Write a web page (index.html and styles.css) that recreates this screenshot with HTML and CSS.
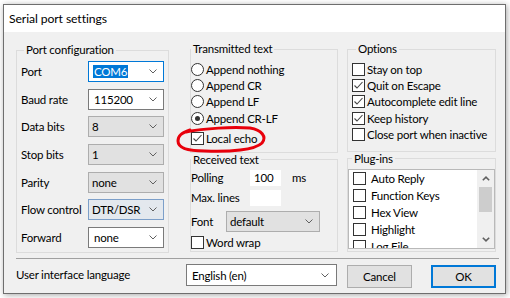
FILE: index.html
```html
<!DOCTYPE html>
<html>
<head>
<meta charset="utf-8">
<title>Serial port settings</title>
<link rel="stylesheet" href="styles.css">
</head>
<body>
<div class="window">
  <div class="titlebar">Serial port settings</div>
  <div class="client">
    <div class="columns">
      <fieldset class="group port-group">
        <legend>Port configuration</legend>
        <div class="form-rows">
          <div class="form-row"><span class="lbl">Port</span><div class="combo edit focus"><span class="selected">COM6</span><svg class="chev" width="8" height="5" viewBox="0 0 8 5"><path d="M0.5 0.5 L4 4 L7.5 0.5"/></svg></div></div>
          <div class="form-row"><span class="lbl">Baud rate</span><div class="combo edit"><span>115200</span><svg class="chev" width="8" height="5" viewBox="0 0 8 5"><path d="M0.5 0.5 L4 4 L7.5 0.5"/></svg></div></div>
          <div class="form-row"><span class="lbl">Data bits</span><div class="combo list"><span>8</span><svg class="chev" width="8" height="5" viewBox="0 0 8 5"><path d="M0.5 0.5 L4 4 L7.5 0.5"/></svg></div></div>
          <div class="form-row"><span class="lbl">Stop bits</span><div class="combo list"><span>1</span><svg class="chev" width="8" height="5" viewBox="0 0 8 5"><path d="M0.5 0.5 L4 4 L7.5 0.5"/></svg></div></div>
          <div class="form-row"><span class="lbl">Parity</span><div class="combo list"><span>none</span><svg class="chev" width="8" height="5" viewBox="0 0 8 5"><path d="M0.5 0.5 L4 4 L7.5 0.5"/></svg></div></div>
          <div class="form-row"><span class="lbl">Flow control</span><div class="combo list hover"><span>DTR/DSR</span><svg class="chev" width="8" height="5" viewBox="0 0 8 5"><path d="M0.5 0.5 L4 4 L7.5 0.5"/></svg></div></div>
          <div class="form-row"><span class="lbl">Forward</span><div class="combo edit"><span>none</span><svg class="chev" width="8" height="5" viewBox="0 0 8 5"><path d="M0.5 0.5 L4 4 L7.5 0.5"/></svg></div></div>
        </div>
      </fieldset>

      <div class="col col-mid">
        <fieldset class="group tx-group">
          <legend>Transmitted text</legend>
          <div class="opt"><span class="radio"></span>Append nothing</div>
          <div class="opt"><span class="radio"></span>Append CR</div>
          <div class="opt"><span class="radio"></span>Append LF</div>
          <div class="opt"><span class="radio on"></span>Append CR-LF</div>
          <div class="opt echo"><span class="check"><svg width="11" height="11" viewBox="0 0 11 11"><path d="M1.5 5.5 L4 8 L9.5 2"/></svg></span>Local echo</div>
        </fieldset>
        <fieldset class="group rx-group">
          <legend>Received text</legend>
          <div class="rx-row"><span class="rx-lbl">Polling</span><span class="edit-box">100</span><span class="unit">ms</span></div>
          <div class="rx-row rx-second"><span class="rx-lbl">Max. lines</span><span class="edit-box"></span></div>
          <div class="rx-row font-row"><span class="font-lbl">Font</span><div class="combo list font-combo"><span>default</span><svg class="chev" width="8" height="5" viewBox="0 0 8 5"><path d="M0.5 0.5 L4 4 L7.5 0.5"/></svg></div></div>
          <div class="opt wrap"><span class="check"></span>Word wrap</div>
        </fieldset>
      </div>

      <div class="col col-right">
        <fieldset class="group options-group">
          <legend>Options</legend>
          <div class="opt"><span class="check"></span>Stay on top</div>
          <div class="opt"><span class="check"><svg width="11" height="11" viewBox="0 0 11 11"><path d="M1.5 5.5 L4 8 L9.5 2"/></svg></span>Quit on Escape</div>
          <div class="opt"><span class="check"><svg width="11" height="11" viewBox="0 0 11 11"><path d="M1.5 5.5 L4 8 L9.5 2"/></svg></span>Autocomplete edit line</div>
          <div class="opt"><span class="check"><svg width="11" height="11" viewBox="0 0 11 11"><path d="M1.5 5.5 L4 8 L9.5 2"/></svg></span>Keep history</div>
          <div class="opt"><span class="check"></span>Close port when inactive</div>
        </fieldset>
        <fieldset class="group plugins-group">
          <legend>Plug-ins</legend>
          <div class="listbox">
            <div class="list-items">
              <div class="item"><span class="check"></span>Auto Reply</div>
              <div class="item"><span class="check"></span>Function Keys</div>
              <div class="item"><span class="check"></span>Hex View</div>
              <div class="item"><span class="check"></span>Highlight</div>
              <div class="item"><span class="check"></span>Log File</div>
            </div>
            <div class="scrollbar">
              <div class="sb-btn"><svg width="8" height="5" viewBox="0 0 8 5"><path d="M0.8 4.3 L4 1.2 L7.2 4.3"/></svg></div>
              <div class="sb-track"><div class="sb-thumb"></div></div>
              <div class="sb-btn"><svg width="8" height="5" viewBox="0 0 8 5"><path d="M0.8 0.7 L4 3.8 L7.2 0.7"/></svg></div>
            </div>
          </div>
        </fieldset>
      </div>
    </div>

    <div class="separator"></div>

    <div class="bottom-row">
      <span class="lang-lbl">User interface language</span>
      <div class="combo edit lang-combo"><span>English (en)</span><svg class="chev" width="8" height="5" viewBox="0 0 8 5"><path d="M0.5 0.5 L4 4 L7.5 0.5"/></svg></div>
      <div class="btn cancel">Cancel</div>
      <div class="btn ok">OK</div>
    </div>
  </div>
</div>

<svg class="annotation" width="510" height="298" viewBox="0 0 510 298">
  <path d="M186 132 C205 128 232 127 250 128 C262 130 267 137 262 143 C255 150 230 152 205 151 C188 151 178 148 178 141 C178 136 181 133 190 130"/>
</svg>
</body>
</html>
```

FILE: styles.css
```css
* { box-sizing: border-box; }

html, body {
  margin: 0;
  padding: 0;
}

body {
  width: 510px;
  height: 298px;
  overflow: hidden;
  background: #ffffff;
  font-family: Lato, "Liberation Sans", sans-serif;
  font-size: 11.5px;
  letter-spacing: -0.2px;
  color: #000;
  position: relative;
}

.window {
  margin: 4px 0 0 3px;
  width: 503px;
  height: 290px;
  border: 1px solid #6e6e6e;
  box-shadow: 1px 1px 6px rgba(0, 0, 0, 0.35);
  background: #f0f0f0;
  display: flex;
  flex-direction: column;
}

.titlebar {
  height: 27px;
  flex: none;
  background: #ffffff;
  padding-left: 5px;
  font-size: 12.2px;
  letter-spacing: -0.1px;
  line-height: 27px;
}

.client {
  flex: 1;
  padding: 10px 0 0 12px;
}

.columns {
  display: flex;
  align-items: flex-start;
}

.group {
  margin: 0;
  padding: 0;
  min-width: 0;
  border: 1px solid #dcdcdc;
}

.group legend {
  padding: 0 2px;
  line-height: 14px;
  font-size: 11.5px;
}

/* Port configuration */
.port-group {
  width: 153px;
  height: 210px;
  margin-top: 1px;
  padding: 4px 4px 0 3px;
}
.port-group legend { margin-left: 4px; }

.form-rows {
  display: flex;
  flex-direction: column;
  gap: 6.67px;
}

.form-row {
  display: flex;
  align-items: center;
  justify-content: space-between;
  height: 21px;
}

.lbl { padding-left: 1px; }

.combo {
  width: 76px;
  height: 21px;
  display: flex;
  align-items: center;
  border: 1px solid #adadad;
  padding: 0 6px 0 3px;
  white-space: nowrap;
}
.combo .chev {
  margin-left: auto;
  flex: none;
}
.chev path {
  fill: none;
  stroke: #606060;
  stroke-width: 1;
}

.combo.edit {
  background: #ffffff;
  border-color: #7a7a7a;
  padding-left: 5px;
}
.combo.list {
  background: #e1e1e1;
  border-color: #adadad;
}
.combo.focus {
  border-color: #0078d7;
  padding-left: 4px;
}
.combo.hover {
  background: #e3e8ee;
  border-color: #7c9fc9;
}

.selected {
  background: #0078d7;
  color: #ffffff;
  line-height: 13px;
  padding: 0 1px;
}

/* middle column */
.col-mid {
  margin-left: 21px;
  width: 148px;
}

.tx-group {
  width: 148px;
  padding: 5px 0 5px 0;
}
.tx-group legend { margin-left: 0; }

.opt {
  display: flex;
  align-items: center;
  height: 16.33px;
  white-space: nowrap;
}

.radio {
  width: 13px;
  height: 13px;
  border: 1px solid #333;
  border-radius: 50%;
  background: #fff;
  margin-right: 2px;
  flex: none;
  display: flex;
  align-items: center;
  justify-content: center;
}
.radio.on::after {
  content: "";
  width: 5px;
  height: 5px;
  border-radius: 50%;
  background: #333;
}

.check {
  width: 13px;
  height: 13px;
  border: 1px solid #333;
  background: #fff;
  margin-right: 2px;
  flex: none;
  display: block;
}
.check svg {
  display: block;
}
.check path {
  fill: none;
  stroke: #444;
  stroke-width: 1.1;
}

.echo { margin-top: 4px; }

.rx-group {
  width: 148px;
  padding: 3px 0 0 0;
}
.rx-group legend { margin-left: 0; }

.rx-row {
  display: flex;
  align-items: center;
  height: 16px;
}
.rx-second { margin-top: 4px; }
.font-row { margin-top: 5px; height: 21px; }

.rx-lbl { width: 59px; }
.font-lbl { width: 35px; }

.edit-box {
  width: 31px;
  height: 16px;
  background: #ffffff;
  padding-left: 4px;
  line-height: 16px;
}
.unit { margin-left: 11px; }

.font-combo { width: 94px; }

.wrap { margin-top: 3px; height: 16px; }

/* right column */
.col-right {
  margin-left: 9px;
  width: 149px;
}

.options-group {
  width: 149px;
  padding: 5px 0 8px 4px;
}
.options-group legend { margin-left: 4px; }

.plugins-group {
  width: 149px;
  padding: 3px 0 2px 0;
}
.plugins-group legend { margin-left: 4px; }

.listbox {
  width: 147px;
  height: 80px;
  border: 1px solid #b9b9b9;
  background: #ffffff;
  display: flex;
}

.list-items {
  flex: 1;
  overflow: hidden;
}

.item {
  height: 17px;
  display: flex;
  align-items: center;
  padding-left: 4px;
  white-space: nowrap;
}
.item .check { margin-right: 5px; }

.scrollbar {
  width: 17px;
  flex: none;
  background: #f0f0f0;
  display: flex;
  flex-direction: column;
}
.sb-btn {
  height: 17px;
  display: flex;
  align-items: center;
  justify-content: center;
}
.sb-btn path {
  fill: none;
  stroke: #606060;
  stroke-width: 1.6;
}
.sb-track { flex: 1; }
.sb-thumb {
  height: 25px;
  margin: 0 2px;
  background: #cdcdcd;
}

/* bottom */
.separator {
  width: 483px;
  height: 1px;
  margin-top: 5px;
  background: #a0a0a0;
}

.bottom-row {
  display: flex;
  align-items: flex-start;
  margin-top: 5px;
}

.lang-lbl {
  width: 170px;
  line-height: 22px;
}

.lang-combo {
  width: 151px;
  height: 22px;
  padding-right: 7px;
}

.btn {
  width: 65px;
  height: 23px;
  margin-top: 1px;
  background: #e1e1e1;
  border: 1px solid #adadad;
  display: flex;
  align-items: center;
  justify-content: center;
}
.cancel { margin-left: 10px; }
.ok {
  margin-left: 19px;
  border: 2px solid #0078d7;
}

.annotation {
  position: absolute;
  left: 0;
  top: 0;
  pointer-events: none;
}
.annotation path {
  fill: none;
  stroke: #e8000b;
  stroke-width: 3;
  stroke-linecap: round;
  stroke-linejoin: round;
}
```
